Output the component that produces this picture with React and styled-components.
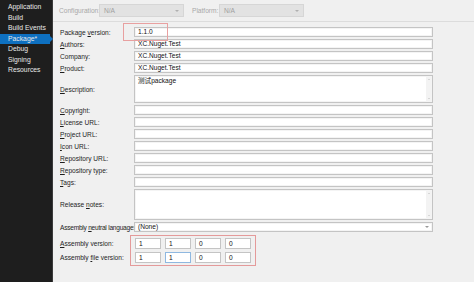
import React from 'react'
import styled, { createGlobalStyle } from 'styled-components'

const Global = createGlobalStyle`
  html, body { margin: 0; padding: 0; background: #f0f0f0; }
  body { font-family: "Liberation Sans", "Noto Sans CJK SC", sans-serif; }
`

const Frame = styled.div`
  display: flex;
  width: 474px;
  height: 282px;
  overflow: hidden;
  font-size: 6.6px;
`

const Sidebar = styled.nav`
  width: 53px;
  flex: none;
  background: #1e1e1e;
  border-right: 1px solid #3a3a3a;
  padding-top: 2px;
  box-sizing: border-box;
  font-size: 6.8px;
`

const Tab = styled.div`
  position: relative;
  height: 10.5px;
  line-height: 10.5px;
  padding-left: 8px;
  color: #e8e8e8;
  background: ${p => (p.$active ? '#0e70c0' : 'transparent')};
  margin-right: ${p => (p.$active ? '2px' : '0')};
  white-space: nowrap;
  &::after {
    content: '';
    display: ${p => (p.$active ? 'block' : 'none')};
    position: absolute;
    right: -3px;
    top: 2.5px;
    border-top: 3px solid transparent;
    border-bottom: 3px solid transparent;
    border-left: 3px solid #0e70c0;
  }
`

const Content = styled.main`
  flex: 1;
  display: flex;
  flex-direction: column;
  background: #f0f0f0;
`

const Toolbar = styled.div`
  height: 22px;
  display: flex;
  align-items: center;
  padding-left: 6px;
  border-bottom: 1px solid #dcdcdc;
  box-sizing: border-box;
  color: #a8a8a8;
`

const ToolLabel = styled.span`
  width: ${p => p.$w}px;
  margin-left: ${p => p.$gap || 0}px;
`

const DisabledCombo = styled.div`
  width: 85px;
  height: 13px;
  box-sizing: border-box;
  background: #e2e2e2;
  border: 1px solid #d6d6d6;
  display: flex;
  align-items: center;
  justify-content: space-between;
  padding: 0 4px 0 4px;
  color: #a0a0a0;
`

const Caret = styled.span`
  width: 0;
  height: 0;
  border-left: 2px solid transparent;
  border-right: 2px solid transparent;
  border-top: 2px solid ${p => p.$color || '#b0b0b0'};
`

const Form = styled.div`
  position: relative;
  padding: 5px 0 0 7px;
`

const Grid = styled.div`
  display: grid;
  grid-template-columns: 74px 299px;
  row-gap: 2px;
  align-items: center;
`

const Label = styled.label`
  color: #1e1e1e;
  white-space: nowrap;
  letter-spacing: ${p => (p.$tight ? '-0.25px' : 'normal')};
`

const Key = styled.u`
  text-decoration-thickness: 0.5px;
`

const Field = styled.div`
  height: ${p => p.$h || 10}px;
  box-sizing: border-box;
  background: #fff;
  border: 1px solid #c4c4c4;
  box-shadow: inset 0 0 0 1px #f4f4f4;
  padding: 0 3px;
  line-height: ${p => (p.$h ? 9 : 8)}px;
  color: #111;
  position: relative;
  display: flex;
  align-items: ${p => (p.$h ? 'flex-start' : 'center')};
  justify-content: space-between;
`

const Scroll = styled.div`
  position: absolute;
  right: 1px;
  top: 1px;
  bottom: 1px;
  width: 5px;
  background: #f3f3f3;
  display: flex;
  flex-direction: column;
  justify-content: space-between;
  align-items: center;
  padding: 2px 0;
  box-sizing: border-box;
`

const Arrow = styled.span`
  width: 0;
  height: 0;
  border-left: 1.5px solid transparent;
  border-right: 1.5px solid transparent;
  ${p => (p.$up ? 'border-bottom: 1.5px solid #bbb;' : 'border-top: 1.5px solid #bbb;')}
`

const Highlight = styled.div`
  position: absolute;
  left: 70px;
  top: 1px;
  width: 45px;
  height: 18px;
  border: 1px solid #e8a0a0;
  box-sizing: border-box;
`

const VersionSection = styled.div`
  display: flex;
  margin-top: 3px;
`

const VersionLabels = styled.div`
  width: 70px;
  display: flex;
  flex-direction: column;
  justify-content: space-around;
  padding: 2px 0;
`

const VersionFrame = styled.div`
  border: 1px solid #e49a9a;
  padding: 2px 4px 2px 4px;
  display: flex;
  flex-direction: column;
  gap: 3px;
`

const VersionRow = styled.div`
  display: flex;
  gap: 4px;
`

const Part = styled.div`
  width: 26px;
  height: 11px;
  box-sizing: border-box;
  background: #fff;
  border: 1px solid ${p => (p.$focus ? '#8fb8e0' : '#c4c4c4')};
  padding-left: 3px;
  line-height: 9px;
  color: #111;
`

const tabs = ['Application', 'Build', 'Build Events', 'Package*', 'Debug', 'Signing', 'Resources']

const rows = [
  [<>Package <Key>v</Key>ersion:</>, '1.1.0'],
  [<><Key>A</Key>uthors:</>, 'XC.Nuget.Test'],
  [<>Company:</>, 'XC.Nuget.Test'],
  [<><Key>P</Key>roduct:</>, 'XC.Nuget.Test'],
  [<><Key>D</Key>escription:</>, '测试package', 28],
  [<><Key>C</Key>opyright:</>, ''],
  [<><Key>L</Key>icense URL:</>, ''],
  [<><Key>P</Key>roject URL:</>, ''],
  [<><Key>I</Key>con URL:</>, ''],
  [<><Key>R</Key>epository URL:</>, ''],
  [<><Key>R</Key>epository type:</>, ''],
  [<><Key>T</Key>ags:</>, ''],
  [<>Release <Key>n</Key>otes:</>, '', 31],
]

export default function App() {
  return (
    <>
      <Global />
      <Frame>
        <Sidebar>
          {tabs.map(t => (
            <Tab key={t} $active={t === 'Package*'}>{t}</Tab>
          ))}
        </Sidebar>
        <Content>
          <Toolbar>
            <ToolLabel $w={40}>Configuration:</ToolLabel>
            <DisabledCombo>N/A<Caret /></DisabledCombo>
            <ToolLabel $w={27} $gap={8}>Platform:</ToolLabel>
            <DisabledCombo>N/A<Caret /></DisabledCombo>
          </Toolbar>
          <Form>
            <Grid>
              {rows.map(([label, value, h], i) => (
                <React.Fragment key={i}>
                  <Label>{label}</Label>
                  <Field $h={h}>
                    {value}
                    {h && (
                      <Scroll>
                        <Arrow $up />
                        <Arrow />
                      </Scroll>
                    )}
                  </Field>
                </React.Fragment>
              ))}
              <Label $tight>Assembly <Key>n</Key>eutral language:</Label>
              <Field>(None)<Caret $color="#999" /></Field>
            </Grid>
            <VersionSection>
              <VersionLabels>
                <Label><Key>A</Key>ssembly version:</Label>
                <Label>Assembly <Key>f</Key>ile version:</Label>
              </VersionLabels>
              <VersionFrame>
                <VersionRow>
                  <Part>1</Part><Part>1</Part><Part>0</Part><Part>0</Part>
                </VersionRow>
                <VersionRow>
                  <Part>1</Part><Part $focus>1</Part><Part>0</Part><Part>0</Part>
                </VersionRow>
              </VersionFrame>
            </VersionSection>
            <Highlight />
          </Form>
        </Content>
      </Frame>
    </>
  )
}
